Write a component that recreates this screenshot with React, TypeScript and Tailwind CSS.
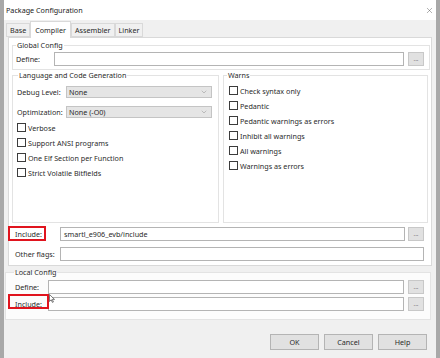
import { ChevronDown, X } from 'lucide-react';

const font = { fontFamily: '"Noto Sans", "Liberation Sans", sans-serif' };

function Check({ label }: { label: string }) {
  return (
    <div className="h-[15px] flex items-center gap-[2px]">
      <span className="w-[9px] h-[9px] border border-[#3c3c3c] bg-white shrink-0" />
      <span>{label}</span>
    </div>
  );
}

function Select({ value }: { value: string }) {
  return (
    <div className="flex-1 h-[12px] bg-[#e5e5e5] border border-[#c4c4c4] flex items-center justify-between pl-[2px] pr-[3px]">
      <span>{value}</span>
      <ChevronDown size={8} strokeWidth={1.2} className="text-[#7a7a7a]" />
    </div>
  );
}

function Field({ value = '' }: { value?: string }) {
  return (
    <div className="flex-1 h-[14px] bg-white border border-[#b4b4b4] flex items-center pl-[3px]">{value}</div>
  );
}

function Dots() {
  return (
    <div className="w-[16px] h-[14px] bg-[#e1e1e1] border border-[#c8c8c8] flex items-center justify-center text-[6px] leading-none text-[#555] shrink-0">
      ...
    </div>
  );
}

function Tab({ label, active }: { label: string; active?: boolean }) {
  return active ? (
    <div className="relative z-10 -mb-px h-[17px] px-[4px] bg-white border border-b-0 border-[#d9d9d9] flex items-center">{label}</div>
  ) : (
    <div className="h-[14px] px-[3px] bg-[#f0f0f0] border border-[#d9d9d9] flex items-center">{label}</div>
  );
}

function Button({ label }: { label: string }) {
  return (
    <div className="w-[49px] h-[16px] bg-[#e1e1e1] border border-[#b4b4b4] flex items-center justify-center">{label}</div>
  );
}

export default function App() {
  return (
    <div className="w-[440px] h-[358px] flex bg-[#a8a8a8] px-[4px] text-[7.2px] leading-[10px] text-[#2a2a2a]" style={font}>
      <div className="flex-1 flex flex-col bg-[#f0f0f0]">
        <div className="h-[20px] bg-white flex items-center justify-between pl-[2px] pr-[2px] text-[#1a1a1a]">
          <span>Package Configuration</span>
          <X size={9} strokeWidth={1} className="text-[#333]" />
        </div>

        <div className="h-[17px] flex items-end pl-[2px]">
          <Tab label="Base" />
          <Tab label="Compiler" active />
          <Tab label="Assembler" />
          <Tab label="Linker" />
        </div>

        <div className="mx-[4px] h-[229px] bg-white border border-[#d9d9d9] pt-[2px] pl-[3px] pr-[1px] flex flex-col">
          <fieldset className="border border-[#e3e3e3] pl-[2px] pr-[5px] pt-[2px] pb-[3px]">
            <legend className="ml-[1px] px-[1px]">Global Config</legend>
            <div className="flex items-center gap-[4px]">
              <span className="w-[35px] pl-[1px]">Define:</span>
              <Field />
              <Dots />
            </div>
          </fieldset>

          <div className="flex gap-[4px] h-[153px]">
            <fieldset className="w-[207px] border border-[#e3e3e3] pl-[4px] pr-[6px] pt-[6px]">
              <legend className="ml-[1px] px-[1px]">Language and Code Generation</legend>
              <div className="flex items-center">
                <span className="w-[49px]">Debug Level:</span>
                <Select value="None" />
              </div>
              <div className="flex items-center mt-[8px] mb-[2px]">
                <span className="w-[49px]">Optimization:</span>
                <Select value="None (-O0)" />
              </div>
              <Check label="Verbose" />
              <Check label="Support ANSI programs" />
              <Check label="One Elf Section per Function" />
              <Check label="Strict Volatile Bitfields" />
            </fieldset>
            <fieldset className="w-[205px] border border-[#e3e3e3] pl-[5px] pt-[3px]">
              <legend className="-ml-[2px] px-[1px]">Warns</legend>
              <Check label="Check syntax only" />
              <Check label="Pedantic" />
              <Check label="Pedantic warnings as errors" />
              <Check label="Inhibit all warnings" />
              <Check label="All warnings" />
              <Check label="Warnings as errors" />
            </fieldset>
          </div>

          <div className="relative flex items-center mt-[4px] pr-[6px]">
            <span className="w-[48px] pl-[3px]">Include:</span>
            <Field value="smartl_e906_evb/include" />
            <div className="w-[3px]" />
            <Dots />
            <div className="absolute -left-[4px] -top-[1px] w-[38px] h-[15px] border-2 border-[#e0141e]" />
          </div>

          <div className="flex items-center mt-[6px] pr-[6px]">
            <span className="w-[48px] pl-[3px]">Other flags:</span>
            <Field />
          </div>
        </div>

        <fieldset className="ml-[1px] w-[426px] mt-[1px] border border-[#e3e3e3] bg-[#fcfcfc] pl-[2px] pr-[6px] pt-[3px] pb-[8px]">
          <legend className="ml-[6px] px-[1px]">Local Config</legend>
          <div className="flex items-center gap-[4px]">
            <span className="w-[36px] pl-[7px]">Define:</span>
            <Field />
            <Dots />
          </div>
          <div className="relative flex items-center gap-[4px] mt-[3px]">
            <span className="w-[36px] pl-[7px]">Include:</span>
            <Field />
            <Dots />
            <div className="absolute left-0 -top-[3px] w-[41px] h-[15px] border-2 border-[#e0141e]" />
            <svg className="absolute left-[41px] -top-[3px]" width="6" height="9" viewBox="0 0 6 9">
              <path d="M0.5 0.5 L0.5 7.5 L2.2 5.8 L3.4 8.4 L4.4 8 L3.3 5.4 L5.5 5.4 Z" fill="white" stroke="#444" strokeWidth="0.7" />
            </svg>
          </div>
        </fieldset>

        <div className="flex justify-end gap-[5px] pr-[9px] mt-[14px]">
          <Button label="OK" />
          <Button label="Cancel" />
          <Button label="Help" />
        </div>
      </div>
    </div>
  );
}
